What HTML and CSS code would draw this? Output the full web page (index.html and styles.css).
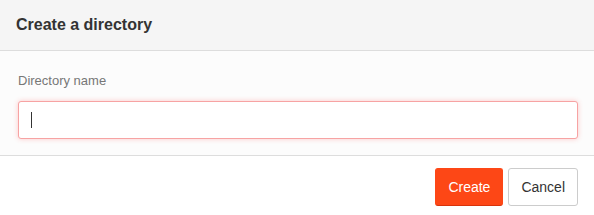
FILE: index.html
```html
<!DOCTYPE html>
<html>
<head>
  <meta charset="UTF-8">
  <title>Create a directory</title>
  <link rel="stylesheet" href="styles.css">
</head>
<body>
  <div class="modal">
    <div class="modal-header">Create a directory</div>
    <div class="modal-body">
      <label for="dirName">Directory name</label>
      <input type="text" id="dirName" name="Directory" class="has-caret">
    </div>
    <div class="modal-footer">
      <button class="btn btn-primary">Create</button>
      <button class="btn btn-default">Cancel</button>
    </div>
  </div>
</body>
</html>
```

FILE: styles.css
```css
body {
  margin: 0;
  background-color: #fff;
  font-family: "Liberation Sans", Arial, sans-serif;
  color: #333;
}

.modal {
  width: 594px;
}

.modal-header {
  background-color: #f5f5f5;
  border-bottom: 1px solid #ddd;
  height: 50px;
  line-height: 50px;
  padding: 0 16px;
  font-size: 16px;
  font-weight: bold;
  color: #333;
}

.modal-body {
  background-color: #fcfcfc;
  border-bottom: 1px solid #ddd;
  padding: 20px 16px 16px 18px;
}

label {
  display: block;
  font-size: 13px;
  line-height: 20px;
  color: #777;
  margin-bottom: 10px;
}

input {
  display: block;
  box-sizing: border-box;
  width: 560px;
  height: 38px;
  padding: 0 12px;
  font-family: inherit;
  font-size: 14px;
  color: #333;
  background-color: #fff;
  border: 1px solid #f7a3a3;
  border-radius: 3px;
  box-shadow: 0 0 5px rgba(255, 80, 80, 0.3);
  outline: none;
}

/* focused field with the text cursor showing */
input.has-caret {
  background: #fff linear-gradient(#333, #333) no-repeat 12px 10px / 1px 16px;
}

.modal-footer {
  display: flex;
  justify-content: flex-end;
  gap: 5px;
  padding: 12px 16px;
}

.btn {
  height: 38px;
  padding: 0 12px;
  font-family: inherit;
  font-size: 14px;
  border-radius: 3px;
  cursor: pointer;
}

.btn-primary {
  background-color: #fd4716;
  color: #fff;
  border: 1px solid #fd4716;
  border-bottom-color: #d8330b;
}

.btn-default {
  background-color: #fff;
  color: #333;
  border: 1px solid #ccc;
}
```
